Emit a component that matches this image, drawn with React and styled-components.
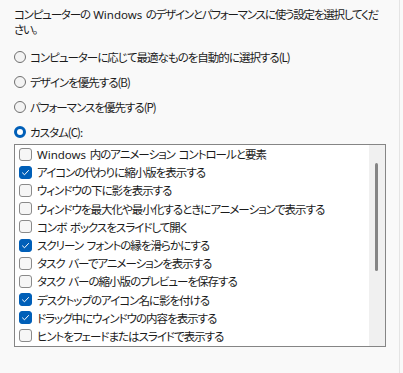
import React from "react";
import styled, { createGlobalStyle } from "styled-components";

const GlobalStyle = createGlobalStyle`
  html, body {
    margin: 0;
    padding: 0;
    background: #f9f9f9;
  }
  body {
    font-family: "Noto Sans CJK JP", "Noto Sans", sans-serif;
    font-size: 11.5px;
    letter-spacing: -1px;
    word-spacing: 2px;
    color: #1b1b1b;
    font-feature-settings: "palt";
  }
`;

const Page = styled.div`
  width: 400px;
  height: 373px;
  box-sizing: border-box;
  border-right: 1px solid #e4e4e4;
  padding: 7px 0 0 14px;
`;

const Heading = styled.p`
  margin: 0;
  line-height: 15px;
  white-space: nowrap;
  letter-spacing: -1.2px;
`;

const Latin = styled.span`
  font-family: "Noto Sans", sans-serif;
  letter-spacing: 0;
  font-size: 11.5px;
`;

const RadioGroup = styled.div`
  display: flex;
  flex-direction: column;
  margin-top: 7px;
`;

const RadioRow = styled.label`
  display: flex;
  align-items: center;
  height: 25px;
  gap: 4px;
`;

const RadioDot = styled.span`
  width: 12px;
  height: 12px;
  box-sizing: border-box;
  border-radius: 50%;
  flex: none;
  border: ${p => (p.checked ? "3px solid #005fb8" : "1px solid #6f6f6f")};
  background: ${p => (p.checked ? "#ffffff" : "#f3f3f3")};
`;

const ListBox = styled.div`
  width: 372px;
  height: 203px;
  box-sizing: border-box;
  border: 1px solid #858585;
  background: #ffffff;
  display: flex;
  overflow: hidden;
`;

const List = styled.ul`
  list-style: none;
  margin: 0;
  padding: 0 0 0 4px;
  flex: 1;
  overflow: hidden;
`;

const Item = styled.li`
  display: flex;
  align-items: center;
  height: 18.2px;
  gap: 5px;
  white-space: pre;
`;

const Box = styled.span`
  width: 13px;
  height: 13px;
  box-sizing: border-box;
  border-radius: 3px;
  flex: none;
  display: flex;
  align-items: center;
  justify-content: center;
  border: 1px solid ${p => (p.checked ? "#005fb8" : "#8a8a8a")};
  background: ${p => (p.checked ? "#005fb8" : "#f6f6f6")};
`;

const ScrollTrack = styled.div`
  width: 16px;
  flex: none;
  background: #f0f0f0;
  position: relative;
`;

const Thumb = styled.div`
  position: absolute;
  left: 6px;
  top: 18px;
  width: 3px;
  height: 108px;
  border-radius: 2px;
  background: #858585;
`;

const items = [
  [<><Latin>Windows</Latin> 内のアニメーション コントロールと要素</>, false],
  ["アイコンの代わりに縮小版を表示する", true],
  ["ウィンドウの下に影を表示する", false],
  ["ウィンドウを最大化や最小化するときにアニメーションで表示する", false],
  ["コンボ ボックスをスライドして開く", false],
  ["スクリーン フォントの縁を滑らかにする", true],
  ["タスク バーでアニメーションを表示する", false],
  ["タスク バーの縮小版のプレビューを保存する", false],
  ["デスクトップのアイコン名に影を付ける", true],
  ["ドラッグ中にウィンドウの内容を表示する", true],
  ["ヒントをフェードまたはスライドで表示する", false],
  ["マウス ポインターの下に影を表示する", true]
];

const radios = [
  ["コンピューターに応じて最適なものを自動的に選択する(L)", false],
  ["デザインを優先する(B)", false],
  ["パフォーマンスを優先する(P)", false],
  ["カスタム(C):", true]
];

function Check() {
  return (
    <svg width="9" height="9" viewBox="0 0 9 9">
      <path d="M1.2 4.6 L3.5 6.8 L7.8 2.2" fill="none" stroke="#fff" strokeWidth="1" />
    </svg>
  );
}

export default function App() {
  return (
    <>
      <GlobalStyle />
      <Page>
        <Heading>
          コンピューターの <Latin>Windows</Latin> のデザインとパフォーマンスに使う設定を選択してくだ
          <br />
          さい。
        </Heading>
        <RadioGroup>
          {radios.map(([label, on], i) => (
            <RadioRow key={i}>
              <RadioDot checked={on} />
              {label}
            </RadioRow>
          ))}
        </RadioGroup>
        <ListBox>
          <List>
            {items.map(([label, on], i) => (
              <Item key={i}>
                <Box checked={on}>{on && <Check />}</Box>
                <span>{label}</span>
              </Item>
            ))}
          </List>
          <ScrollTrack>
            <Thumb />
          </ScrollTrack>
        </ListBox>
      </Page>
    </>
  );
}
